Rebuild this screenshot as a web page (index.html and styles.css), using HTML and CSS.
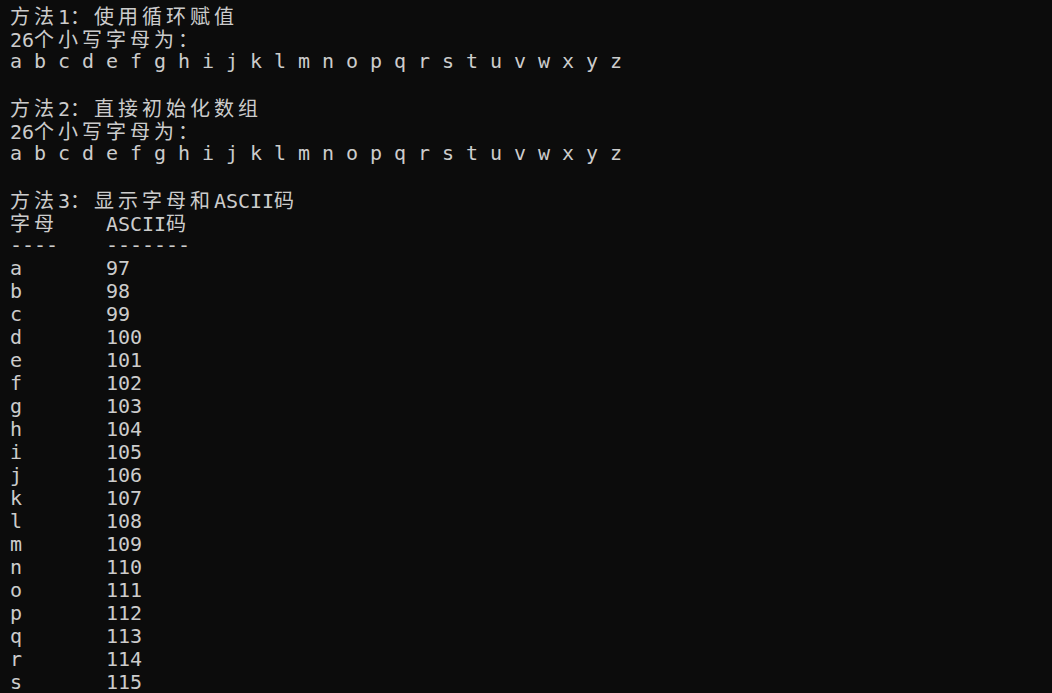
FILE: index.html
```html
<!DOCTYPE html>
<html lang="zh-CN">
<head>
    <meta charset="UTF-8">
    <meta name="viewport" content="width=device-width, initial-scale=1.0">
    <title>26个小写字母</title>
    <link rel="stylesheet" href="styles.css">
</head>
<body>

<div class="console">
    <div class="line"><span class="cjk">方法</span>1<span class="cjk">：使用循环赋值</span></div>
    <div class="line">26<span class="cjk">个小写字母为：</span></div>
    <div class="line">a b c d e f g h i j k l m n o p q r s t u v w x y z</div>
    <div class="line"></div>
    <div class="line"><span class="cjk">方法</span>2<span class="cjk">：直接初始化数组</span></div>
    <div class="line">26<span class="cjk">个小写字母为：</span></div>
    <div class="line">a b c d e f g h i j k l m n o p q r s t u v w x y z</div>
    <div class="line"></div>
    <div class="line"><span class="cjk">方法</span>3<span class="cjk">：显示字母和</span>ASCII<span class="cjk">码</span></div>
    <div class="line"><span class="cjk">字母</span>    ASCII<span class="cjk">码</span></div>
    <div class="line">----    -------</div>
    <div class="line">a       97</div>
    <div class="line">b       98</div>
    <div class="line">c       99</div>
    <div class="line">d       100</div>
    <div class="line">e       101</div>
    <div class="line">f       102</div>
    <div class="line">g       103</div>
    <div class="line">h       104</div>
    <div class="line">i       105</div>
    <div class="line">j       106</div>
    <div class="line">k       107</div>
    <div class="line">l       108</div>
    <div class="line">m       109</div>
    <div class="line">n       110</div>
    <div class="line">o       111</div>
    <div class="line">p       112</div>
    <div class="line">q       113</div>
    <div class="line">r       114</div>
    <div class="line">s       115</div>
    <div class="line">t       116</div>
    <div class="line">u       117</div>
    <div class="line">v       118</div>
    <div class="line">w       119</div>
    <div class="line">x       120</div>
    <div class="line">y       121</div>
    <div class="line">z       122</div>
</div>

</body>
</html>
```

FILE: styles.css
```css
html, body {
    margin: 0;
    padding: 0;
    height: 100%;
    overflow: hidden;
    background-color: #0c0c0c;
}

.console {
    padding: 4px 10px;
    color: #cccccc;
    font-family: "DejaVu Sans Mono", monospace;
    font-size: 20px;
    letter-spacing: -0.04px;
    line-height: 23px;
}

/* every terminal row is exactly one cell high */
.line {
    height: 23px;
    white-space: pre;
}

/* wide chars take two cells in the terminal */
.cjk {
    font-family: "Noto Sans CJK SC", sans-serif;
    letter-spacing: 4px;
}
```
